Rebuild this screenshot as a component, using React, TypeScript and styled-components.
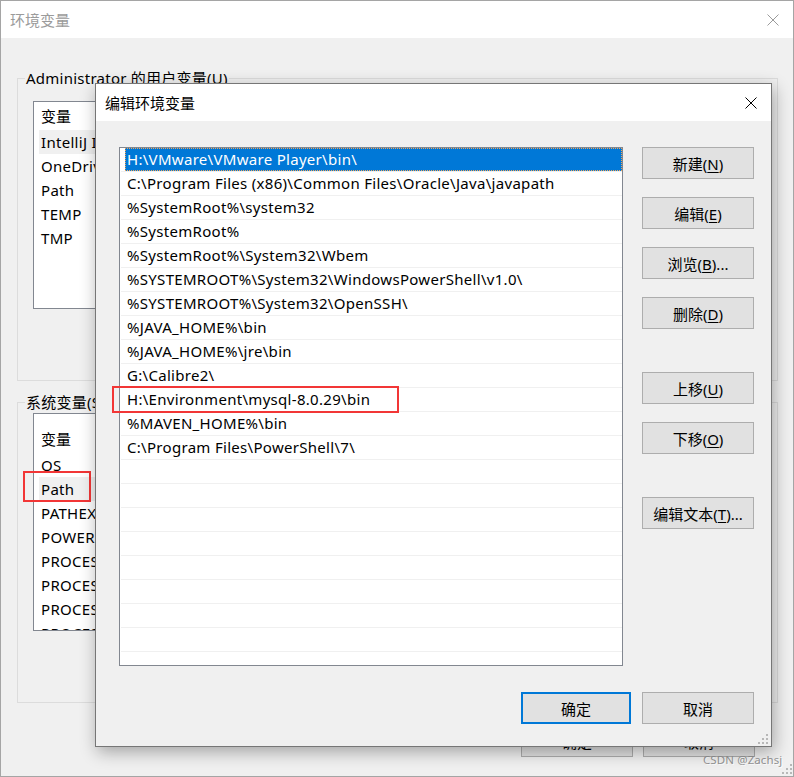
import React from "react";
import styled, { createGlobalStyle } from "styled-components";

const GlobalStyle = createGlobalStyle`
  html, body { margin: 0; padding: 0; background: #f0f0f0; }
  body {
    font-family: "Noto Sans", "Noto Sans CJK SC", sans-serif;
    font-size: 15px;
    color: #000;
  }
  * { box-sizing: border-box; }
`;

const FONT = `"Noto Sans", "Noto Sans CJK SC", sans-serif`;

/* ---------- outer window ---------- */

const Window = styled.div`
  position: relative;
  width: 794px;
  height: 777px;
  border: 1px solid #a5a5a5;
  background: #f0f0f0;
  display: flex;
  flex-direction: column;
  overflow: hidden;
  font-family: ${FONT};
`;

const TitleBar = styled.div<{ $inactive?: boolean }>`
  flex: none;
  height: 37px;
  background: #fff;
  display: flex;
  align-items: center;
  justify-content: space-between;
  padding: 0 14px 0 9px;
  font-size: 15px;
  color: ${(p) => (p.$inactive ? "#9b9b9b" : "#000")};
`;

const CloseIcon = ({ color }: { color: string }) => (
  <svg width="12" height="12" viewBox="0 0 12 12">
    <path d="M0.5 0.5 L11.5 11.5 M11.5 0.5 L0.5 11.5" stroke={color} strokeWidth="1" fill="none" />
  </svg>
);

const Body = styled.div`
  flex: 1;
  display: flex;
  flex-direction: column;
  padding: 30px 15px 0 16px;
`;

const Group = styled.fieldset<{ $top: number }>`
  margin: ${(p) => p.$top}px 0 0 0;
  padding: 0 15px 27px 15px;
  border: 1px solid #dcdcdc;
  min-width: 0;
  display: flex;
  flex-direction: column;
`;

const Legend = styled.legend`
  margin-left: -8px;
  padding: 0 1px;
  font-size: 15px;
  line-height: 20px;
  letter-spacing: 0.25px;
`;

const VarList = styled.div<{ $top: number; $height: number }>`
  margin-top: ${(p) => p.$top}px;
  height: ${(p) => p.$height}px;
  border: 1px solid #828790;
  background: #fff;
  display: flex;
  flex-direction: column;
`;

const VarHeader = styled.div<{ $padTop: number }>`
  flex: none;
  padding: ${(p) => p.$padTop}px 0 0 7px;
  line-height: 28px;
  height: ${(p) => p.$padTop + 28}px;
`;

const Viewport = styled.div`
  flex: 1;
  min-height: 0;
  clip-path: inset(-40px -40px 0 -40px);
`;

const VarRow = styled.div<{ $selected?: boolean }>`
  position: relative;
  height: 24px;
  line-height: 24px;
  margin-left: 5px;
  padding-left: 2px;
  letter-spacing: 0.3px;
  white-space: nowrap;
  background: ${(p) => (p.$selected ? "#f0f0f0" : "transparent")};
`;

const Mark = styled.div<{ $l: number; $t: number; $w: number; $h: number }>`
  position: absolute;
  left: ${(p) => p.$l}px;
  top: ${(p) => p.$t}px;
  width: ${(p) => p.$w}px;
  height: ${(p) => p.$h}px;
  border: 2px solid #f23636;
  pointer-events: none;
`;

const GroupButtons = styled.div`
  margin-top: 12px;
  display: flex;
  justify-content: flex-end;
  gap: 10px;
`;

const WinButton = styled.button<{ $w?: number; $primary?: boolean }>`
  width: ${(p) => p.$w ?? 112}px;
  height: 32px;
  padding: 0;
  background: #e1e1e1;
  border: ${(p) => (p.$primary ? "2px solid #0078d7" : "1px solid #adadad")};
  font-family: ${FONT};
  font-size: 15px;
  color: #000;
  text-align: center;
  u { text-decoration-thickness: 1px; text-underline-offset: 2px; }
`;

const Footer = styled.div`
  margin-top: 22px;
  padding-right: 23px;
  display: flex;
  justify-content: flex-end;
  gap: 10px;
`;

const Grip = styled.div<{ $r: number; $b: number }>`
  position: absolute;
  right: ${(p) => p.$r}px;
  bottom: ${(p) => p.$b}px;
  width: 12px;
  height: 12px;
  line-height: 0;
`;

const GripDots = () => (
  <svg width="12" height="12" viewBox="0 0 12 12">
    {[
      [9, 1],
      [5, 5],
      [9, 5],
      [1, 9],
      [5, 9],
      [9, 9],
    ].map(([x, y], i) => (
      <rect key={i} x={x} y={y} width="2" height="2" fill="#b8b8b8" />
    ))}
  </svg>
);

const Watermark = styled.div`
  position: absolute;
  left: 702px;
  top: 751px;
  font-family: ${FONT};
  font-size: 11.5px;
  letter-spacing: 0.1px;
  color: #959595;
  text-shadow: 1px 1px 0 rgba(255, 255, 255, 0.9);
`;

/* ---------- edit dialog ---------- */

const Dialog = styled.div`
  position: absolute;
  left: 94px;
  top: 82px;
  width: 677px;
  height: 664px;
  border: 1px solid #767676;
  background: #f0f0f0;
  display: flex;
  flex-direction: column;
  box-shadow: 2px 5px 16px rgba(0, 0, 0, 0.32);
  z-index: 1;
`;

const DialogBody = styled.div`
  flex: 1;
  display: flex;
  flex-direction: column;
  padding: 26px 17px 22px 23px;
`;

const DialogMain = styled.div`
  display: flex;
  gap: 19px;
`;

const PathList = styled.div`
  width: 504px;
  height: 519px;
  border: 1px solid #828790;
  background: #fff;
  display: flex;
  flex-direction: column;
`;

const PathRow = styled.div`
  position: relative;
  flex: none;
  height: 24px;
  margin-left: 1px;
  border-bottom: 1px solid #f0f0f0;
  display: flex;
`;

const PathCell = styled.div<{ $selected?: boolean }>`
  flex: 1;
  margin-left: 4px;
  padding-left: 2px;
  height: 23px;
  line-height: 23px;
  letter-spacing: 0.3px;
  white-space: nowrap;
  overflow: hidden;
  background: ${(p) => (p.$selected ? "#0078d7" : "transparent")};
  color: ${(p) => (p.$selected ? "#fff" : "#000")};
  outline: ${(p) => (p.$selected ? "1px dotted #f2a65a" : "none")};
  outline-offset: -1px;
`;

const SideButtons = styled.div`
  width: 112px;
  display: flex;
  flex-direction: column;
`;

const SideButton = styled(WinButton)<{ $gap: number }>`
  margin-top: ${(p) => p.$gap}px;
`;

const DialogFooter = styled.div`
  margin-top: 26px;
  display: flex;
  justify-content: flex-end;
  gap: 11px;
`;

/* ---------- data ---------- */

const userVars = ["IntelliJ IDEA", "OneDrive", "Path", "TEMP", "TMP"];
const sysVars = [
  "OS",
  "Path",
  "PATHEXT",
  "POWERSHELL",
  "PROCESSOR",
  "PROCESSOR",
  "PROCESSOR",
  "PROCESSOR",
];

const paths = [
  "H:\\VMware\\VMware Player\\bin\\",
  "C:\\Program Files (x86)\\Common Files\\Oracle\\Java\\javapath",
  "%SystemRoot%\\system32",
  "%SystemRoot%",
  "%SystemRoot%\\System32\\Wbem",
  "%SYSTEMROOT%\\System32\\WindowsPowerShell\\v1.0\\",
  "%SYSTEMROOT%\\System32\\OpenSSH\\",
  "%JAVA_HOME%\\bin",
  "%JAVA_HOME%\\jre\\bin",
  "G:\\Calibre2\\",
  "H:\\Environment\\mysql-8.0.29\\bin",
  "%MAVEN_HOME%\\bin",
  "C:\\Program Files\\PowerShell\\7\\",
];

const TOTAL_ROWS = 22;

export default function App() {
  const rows = Array.from({ length: TOTAL_ROWS }, (_, i) => paths[i] ?? "");

  return (
    <>
      <GlobalStyle />
      <Window>
        <TitleBar $inactive>
          <span>环境变量</span>
          <CloseIcon color="#9b9b9b" />
        </TitleBar>
        <Body>
          <Group $top={0}>
            <Legend>Administrator 的用户变量(U)</Legend>
            <VarList $top={13} $height={208}>
              <VarHeader $padTop={0}>变量</VarHeader>
              <Viewport>
                {userVars.map((v, i) => (
                  <VarRow key={v} $selected={i === 0}>
                    {v}
                  </VarRow>
                ))}
              </Viewport>
            </VarList>
            <GroupButtons>
              <WinButton>
                新建(<u>N</u>)...
              </WinButton>
              <WinButton>
                编辑(<u>E</u>)...
              </WinButton>
              <WinButton>
                删除(<u>D</u>)
              </WinButton>
            </GroupButtons>
          </Group>

          <Group $top={11}>
            <Legend>系统变量(S)</Legend>
            <VarList $top={1} $height={218}>
              <VarHeader $padTop={11}>变量</VarHeader>
              <Viewport>
                {sysVars.map((v, i) => (
                  <VarRow key={i} $selected={v === "Path"}>
                    {v}
                    {v === "Path" && <Mark $l={-16} $t={-6} $w={68} $h={31} />}
                  </VarRow>
                ))}
              </Viewport>
            </VarList>
            <GroupButtons>
              <WinButton>
                新建(<u>W</u>)...
              </WinButton>
              <WinButton>
                编辑(<u>I</u>)...
              </WinButton>
              <WinButton>
                删除(<u>L</u>)
              </WinButton>
            </GroupButtons>
          </Group>

          <Footer>
            <WinButton>确定</WinButton>
            <WinButton>取消</WinButton>
          </Footer>
        </Body>

        <Dialog>
          <TitleBar>
            <span>编辑环境变量</span>
            <CloseIcon color="#000" />
          </TitleBar>
          <DialogBody>
            <DialogMain>
              <PathList>
                <Viewport>
                  {rows.map((p, i) => (
                    <PathRow key={i}>
                      <PathCell $selected={i === 0}>{p}</PathCell>
                      {p.includes("mysql") && <Mark $l={-9} $t={-2} $w={287} $h={27} />}
                    </PathRow>
                  ))}
                </Viewport>
              </PathList>
              <SideButtons>
                <SideButton $gap={0}>
                  新建(<u>N</u>)
                </SideButton>
                <SideButton $gap={18}>
                  编辑(<u>E</u>)
                </SideButton>
                <SideButton $gap={18}>
                  浏览(<u>B</u>)...
                </SideButton>
                <SideButton $gap={18}>
                  删除(<u>D</u>)
                </SideButton>
                <SideButton $gap={43}>
                  上移(<u>U</u>)
                </SideButton>
                <SideButton $gap={18}>
                  下移(<u>O</u>)
                </SideButton>
                <SideButton $gap={43}>
                  编辑文本(<u>T</u>)...
                </SideButton>
              </SideButtons>
            </DialogMain>
            <DialogFooter>
              <WinButton $primary $w={110}>
                确定
              </WinButton>
              <WinButton $w={112}>取消</WinButton>
            </DialogFooter>
          </DialogBody>
          <Grip $r={2} $b={1}>
            <GripDots />
          </Grip>
        </Dialog>

        <Watermark>CSDN @Zachsj</Watermark>
        <Grip $r={0} $b={1}>
          <GripDots />
        </Grip>
      </Window>
    </>
  );
}
